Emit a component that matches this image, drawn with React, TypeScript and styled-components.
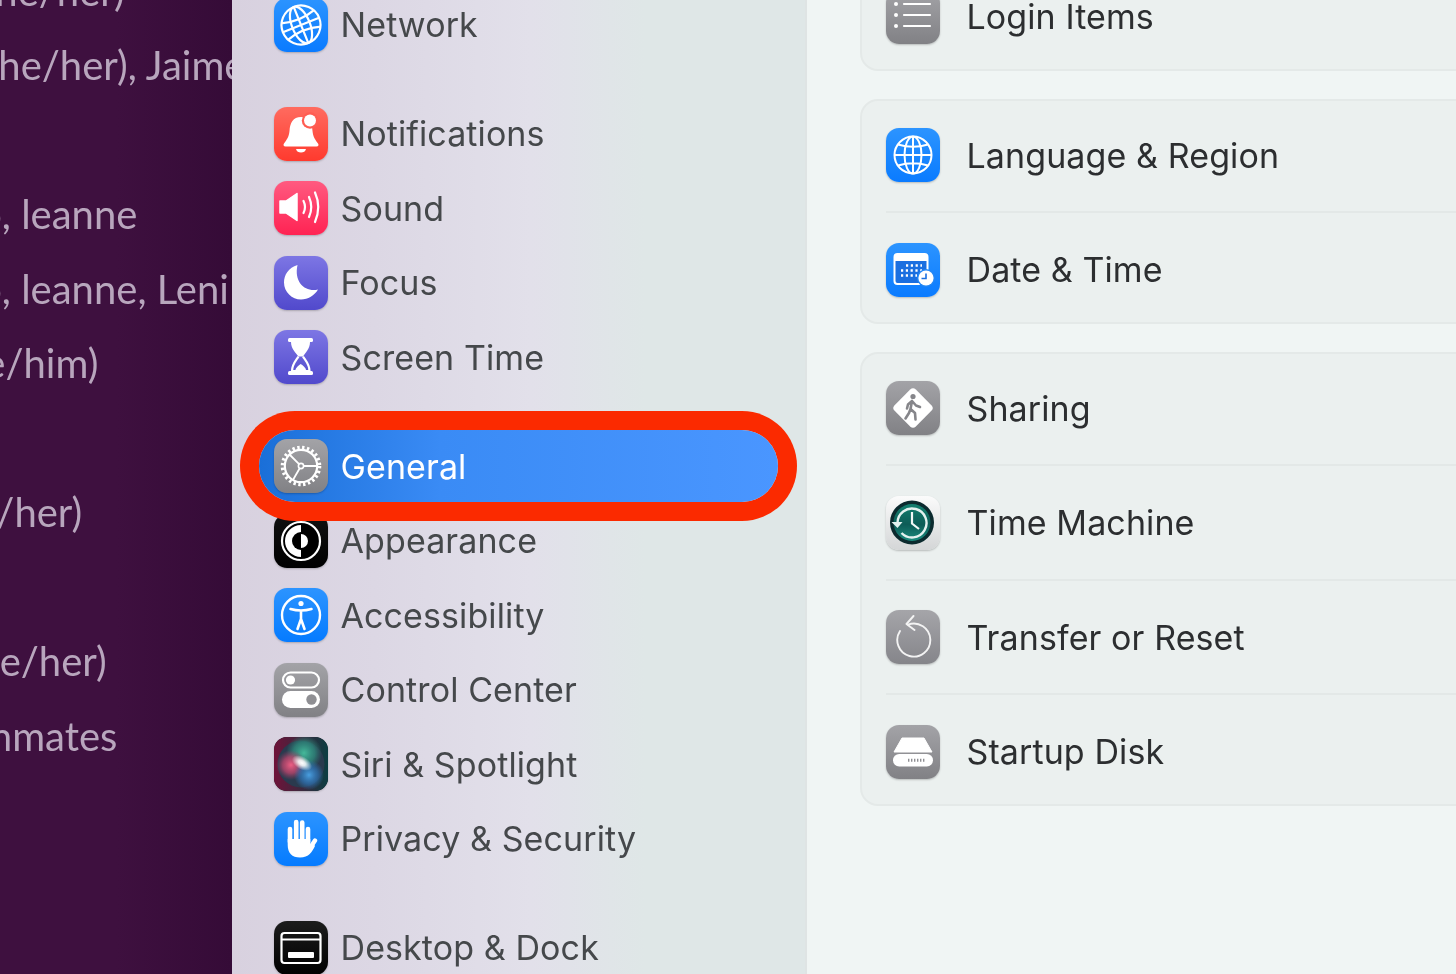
import React from 'react';
import styled, { createGlobalStyle } from 'styled-components';

const Global = createGlobalStyle`
  html, body { margin: 0; padding: 0; background: #f0f5f4; }
  body { font-family: Inter, "Noto Sans", "Liberation Sans", sans-serif; overflow: hidden; }
`;

const Page = styled.div`
  display: flex;
  width: 1456px;
  height: 974px;
  overflow: hidden;
`;

const ChatPane = styled.div`
  flex: 0 0 232px;
  height: 974px;
  overflow: hidden;
  background: linear-gradient(90deg, #3e103f 0%, #3e103f 50%, #350b37 100%);
  font-family: Lato, "Open Sans", sans-serif;
  font-size: 40px;
  color: #b8a6bd;
`;

const ChatList = styled.div`
  margin-top: -46.25px;
`;

const ChatLine = styled.div<{ $shift: number }>`
  height: 74.5px;
  line-height: 74.5px;
  white-space: nowrap;
  margin-left: ${p => p.$shift}px;
  filter: blur(0.4px);
`;

const ChatGap = styled.div`
  height: 40px;
`;

const Sidebar = styled.nav`
  flex: 0 0 519px;
  height: 974px;
  overflow: hidden;
  padding: 0 27px 0 27px;
  border-right: 2px solid #dfe4e4;
  background: linear-gradient(90deg, #d8d1df 0%, #dcd7e4 25%, #e2e0ea 52%, #dfe7e7 72%, #dfe7e7 100%);
`;

const SideList = styled.div`
  display: flex;
  flex-direction: column;
  margin-top: -12.75px;
`;

const SideRow = styled.div<{ $active?: boolean }>`
  position: relative;
  z-index: ${p => (p.$active ? 1 : 0)};
  display: flex;
  flex: 0 0 72px;
  align-items: center;
  gap: 12.5px;
  margin: 1.25px 0;
  padding-left: 15px;
  border-radius: 36px;
  background: ${p => (p.$active ? 'linear-gradient(90deg, #1a6fd8 0%, #3a8bf5 35%, #4a96ff 100%)' : 'transparent')};
  box-shadow: ${p => (p.$active ? '0 0 0 19px #fb2a00' : 'none')};
`;

const SideLabel = styled.span<{ $active?: boolean }>`
  font-size: 34px;
  letter-spacing: 0.1px;
  white-space: nowrap;
  color: ${p => (p.$active ? '#ffffff' : '#45484b')};
  filter: blur(0.4px);
`;

const SideGap = styled.div`
  flex: 0 0 34.5px;
`;

const Content = styled.main`
  flex: 1;
  min-width: 0;
  height: 974px;
  overflow: hidden;
  padding-left: 53px;
  background: #f0f5f4;
`;

const Stack = styled.div`
  display: flex;
  flex-direction: column;
  gap: 27.75px;
  margin-top: -39.5px;
  margin-right: -40px;
`;

const Card = styled.section`
  border: 2px solid #e4e9e8;
  border-radius: 18px;
  background: #ebf0ef;
  padding: 0 0 0 24px;
`;

const CardRow = styled.div`
  display: flex;
  align-items: center;
  gap: 26.5px;
  padding: 29.25px 0;
  border-top: 2px solid #e3e8e7;
  &:first-child { border-top: 0; padding-top: 27px; }
  &:last-child { padding-bottom: 25.75px; }
`;

const CardLabel = styled.span`
  font-size: 34px;
  letter-spacing: 0.1px;
  white-space: nowrap;
  color: #2c2e30;
  filter: blur(0.4px);
`;

const Tile = styled.div<{ $from: string; $to: string }>`
  flex: 0 0 54px;
  width: 54px;
  height: 54px;
  border-radius: 13px;
  overflow: hidden;
  background: linear-gradient(180deg, ${p => p.$from}, ${p => p.$to});
  box-shadow: 0 1px 2px rgba(0, 0, 0, 0.22);
`;

const Art = styled.svg`
  display: block;
  width: 54px;
  height: 54px;
  filter: blur(0.25px);
`;

const W = '#ffffff';

const Blue = ['#2c94ff', '#0a7bff'];
const Gray = ['#a3a3a7', '#818185'];
const Indigo = ['#7d76e4', '#5149cc'];

const icons: Record<string, { c: string[]; art: React.ReactNode }> = {
  network: {
    c: Blue,
    art: (
      <g fill="none" stroke={W} strokeWidth="2.2" transform="rotate(-22 27 27)">
        <circle cx="27" cy="27" r="19.5" />
        <ellipse cx="27" cy="27" rx="9" ry="19.5" />
        <path d="M27 7.5V46.5M9 18Q27 24 45 18M7.5 27H46.5M9 36Q27 30 45 36" />
      </g>
    ),
  },
  bell: {
    c: ['#ff6b5f', '#ff3a2e'],
    art: (
      <g>
        <path fill={W} d="M27 10C19 10 16 16 15.5 24C15 30 12.5 33 10 36.5C9 38 9.5 39.5 11.5 39.5H42.5C44.5 39.5 45 38 44 36.5C41.5 33 39 30 38.5 24C38 16 35 10 27 10Z" />
        <path fill={W} d="M22 42H32C31.5 44.5 29.5 45.5 27 45.5C24.5 45.5 22.5 44.5 22 42Z" />
        <circle cx="36" cy="13.5" r="8.2" fill="#ff5d52" />
        <circle cx="36" cy="13.5" r="6" fill={W} />
      </g>
    ),
  },
  sound: {
    c: ['#ff5a80', '#ff2353'],
    art: (
      <g>
        <path fill={W} stroke={W} strokeWidth="1.5" strokeLinejoin="round" d="M6 20H12L23 12.5V39.5L12 32H6Z" />
        <path fill="none" stroke={W} strokeWidth="2.2" strokeLinecap="round" d="M29.5 20Q32.5 26 29.5 32M35 16Q39.5 26 35 36M41 11.5Q47.5 26 41 41" />
      </g>
    ),
  },
  moon: {
    c: Indigo,
    art: <path fill={W} d="M23.5 9C14.5 11.5 10 19 10 26.5C10 36 18 43.5 27 43.5C34 43.5 40.5 39.5 44 33.5C32 36.5 19.5 27 23.5 9Z" />,
  },
  hourglass: {
    c: Indigo,
    art: (
      <g>
        <rect x="14" y="8" width="25" height="4" rx="1.5" fill={W} />
        <rect x="14" y="41" width="25" height="4" rx="1.5" fill={W} />
        <path fill={W} d="M17 12H36C36 19 31 23 29 26.5H24.5C22 23 17 19 17 12Z" />
        <path fill="none" stroke={W} strokeWidth="2.2" d="M24.5 26.5C22.5 30 18 34 18 41H35.5C35.5 34 31 30 29 26.5" />
        <path fill={W} d="M21 41C22 37 25 35 26.7 34C28.5 35 31.5 37 32.5 41Z" />
      </g>
    ),
  },
  gear: {
    c: Gray,
    art: (
      <g fill="none" stroke={W}>
        <circle cx="27" cy="27" r="18.6" strokeWidth="3.4" strokeDasharray="2.4 2.5" />
        <circle cx="27" cy="27" r="16.2" strokeWidth="2.2" />
        <circle cx="27" cy="27" r="2.6" strokeWidth="1.6" />
        <path strokeWidth="1.8" d="M25.1 25.1L15 15M29.6 27H43.5M25.7 29.3L18.8 41.3" />
      </g>
    ),
  },
  appearance: {
    c: ['#111111', '#000000'],
    art: (
      <g>
        <circle cx="27" cy="27" r="19" fill="#000" stroke={W} strokeWidth="2.2" />
        <path fill={W} d="M27 11A16 16 0 0 0 27 43Z" />
        <path fill="#000" d="M27 18A9 9 0 0 0 27 36Z" />
        <path fill={W} d="M27 20A7 7 0 0 1 27 34Z" />
      </g>
    ),
  },
  access: {
    c: ['#2c94ff', '#057bff'],
    art: (
      <g fill="none" stroke={W}>
        <circle cx="27" cy="27" r="19" strokeWidth="2.4" />
        <circle cx="27" cy="15.5" r="2.6" fill={W} stroke="none" />
        <path strokeWidth="2.6" strokeLinecap="round" d="M16.5 21Q27 24 37.5 21M27 23V31M27 31L23.5 41M27 31L30.5 41" />
      </g>
    ),
  },
  control: {
    c: Gray,
    art: (
      <g>
        <rect x="9" y="9.5" width="36" height="15" rx="7.5" fill="none" stroke={W} strokeWidth="2.2" />
        <circle cx="16.5" cy="17" r="4.6" fill={W} />
        <rect x="8" y="28" width="38" height="17" rx="8.5" fill={W} />
        <circle cx="37.5" cy="36.5" r="5.2" fill="#8f8f93" />
      </g>
    ),
  },
  siri: {
    c: ['#1a1a22', '#101018'],
    art: (
      <g>
        <defs>
          <radialGradient id="sPink"><stop offset="0" stopColor="#ef5f84" /><stop offset="0.55" stopColor="#c9466f" stopOpacity="0.7" /><stop offset="1" stopColor="#a33560" stopOpacity="0" /></radialGradient>
          <radialGradient id="sGreen"><stop offset="0" stopColor="#45b99a" /><stop offset="0.6" stopColor="#2f9a86" stopOpacity="0.65" /><stop offset="1" stopColor="#2b8c7c" stopOpacity="0" /></radialGradient>
          <radialGradient id="sBlue"><stop offset="0" stopColor="#4a9fe0" /><stop offset="0.6" stopColor="#2f7cc4" stopOpacity="0.6" /><stop offset="1" stopColor="#2f7cc4" stopOpacity="0" /></radialGradient>
          <radialGradient id="sWhite"><stop offset="0" stopColor="#ffffff" /><stop offset="0.35" stopColor="#ffffff" stopOpacity="0.85" /><stop offset="1" stopColor="#ffffff" stopOpacity="0" /></radialGradient>
          <linearGradient id="sBase" x1="0" x2="1"><stop offset="0" stopColor="#6f1239" /><stop offset="1" stopColor="#0c3d42" /></linearGradient>
        </defs>
        <rect width="54" height="54" fill="url(#sBase)" />
        <circle cx="27" cy="27" r="23.5" fill="#2a3a4e" />
        <circle cx="30" cy="16" r="18" fill="url(#sGreen)" />
        <circle cx="17" cy="28" r="15" fill="url(#sPink)" />
        <circle cx="35" cy="38" r="15" fill="url(#sBlue)" />
        <ellipse cx="28" cy="26" rx="11" ry="6.5" fill="url(#sWhite)" transform="rotate(30 28 26)" />
      </g>
    ),
  },
  hand: {
    c: ['#2c94ff', '#057bff'],
    art: (
      <g>
        <g stroke={W} strokeWidth="4.6" strokeLinecap="round" fill="none">
          <path d="M16 30V17M22.2 28V10M28.2 28V10.5M34 30V17" />
          <path d="M36 36L41 28.5" strokeWidth="4.4" />
        </g>
        <path fill={W} d="M13.7 27H36.3V34L39 31L41 34C38 40 35 45.5 26 45.5C18 45.5 13.7 41 13.7 33Z" />
      </g>
    ),
  },
  desktop: {
    c: ['#1c1c1c', '#000000'],
    art: (
      <g fill="none" stroke={W}>
        <rect x="7.5" y="12" width="39" height="30" rx="3" strokeWidth="2.2" />
        <path strokeWidth="2" d="M8 18.5H46" />
        <rect x="14" y="31" width="26" height="6" rx="1" fill={W} stroke="none" />
      </g>
    ),
  },
  login: {
    c: Gray,
    art: (
      <g>
        <circle cx="10" cy="14" r="2" fill={W} />
        <circle cx="10" cy="25" r="2" fill={W} />
        <circle cx="10" cy="36" r="2" fill={W} />
        <path stroke={W} strokeWidth="2.2" strokeLinecap="round" d="M18 14H44M18 25H44M18 36H44" />
      </g>
    ),
  },
  language: {
    c: Blue,
    art: (
      <g fill="none" stroke={W} strokeWidth="2">
        <circle cx="27" cy="27" r="18.5" />
        <ellipse cx="27" cy="27" rx="8.5" ry="18.5" />
        <path d="M27 8.5V45.5M8.5 27H45.5M12 16.5Q27 21 42 16.5M12 37.5Q27 33 42 37.5" />
      </g>
    ),
  },
  date: {
    c: Blue,
    art: (
      <g>
        <rect x="8.5" y="11" width="33" height="30" rx="3" fill="#1b6fe0" stroke={W} strokeWidth="2" />
        <path fill={W} d="M8.5 14a3 3 0 0 1 3-3h27a3 3 0 0 1 3 3v4h-33Z" />
        <path stroke={W} strokeWidth="2.4" strokeDasharray="2.2 2.6" d="M20 22.5H36M15 27.5H36M15 32.5H31" />
        <circle cx="40" cy="35" r="9" fill="#2487f5" />
        <circle cx="40" cy="35" r="7.6" fill={W} />
        <path fill="none" stroke="#1b6fe0" strokeWidth="1.6" d="M40 30.5V35.5H35.5" />
      </g>
    ),
  },
  sharing: {
    c: Gray,
    art: (
      <g>
        <rect x="12" y="12" width="30" height="30" rx="4" fill={W} transform="rotate(45 27 27)" />
        <circle cx="27" cy="15.5" r="2.6" fill="#85858a" />
        <path fill="none" stroke="#85858a" strokeWidth="2.6" strokeLinecap="round" strokeLinejoin="round" d="M26 20L24.5 28L29 32L29.5 38.5M24.5 28L23 32L19.5 37.5M26 20L22 23.5L21 27.5M26 20L30 24.5L34 26" />
      </g>
    ),
  },
  time: {
    c: ['#fbfbfb', '#d4d6d7'],
    art: (
      <g>
        <defs>
          <linearGradient id="tmG" x1="0" x2="0" y1="0" y2="1"><stop offset="0" stopColor="#12806f" /><stop offset="0.55" stopColor="#0d5c57" /><stop offset="1" stopColor="#1a8c7e" /></linearGradient>
        </defs>
        <circle cx="26" cy="26.5" r="22" fill="#0b2a2e" />
        <circle cx="26" cy="26.5" r="18.5" fill="url(#tmG)" />
        <path fill="none" stroke="#e3f1ef" strokeWidth="2.4" d="M11.5 27A14.5 14.5 0 1 1 15.5 37" />
        <path fill="#e3f1ef" d="M5.5 26H16.5L11.5 32Z" />
        <path fill="none" stroke="#f2f8f7" strokeWidth="2.2" d="M26 16V27.5L33 33" />
      </g>
    ),
  },
  transfer: {
    c: ['#a5a5a9', '#85858a'],
    art: (
      <g fill="none" stroke="#f3f3f3" strokeWidth="1.9" strokeLinecap="round" strokeLinejoin="round">
        <path d="M22 14.6A16.5 16.5 0 1 1 14 21" />
        <path d="M27.5 6L20.5 14L28.5 20" />
      </g>
    ),
  },
  disk: {
    c: Gray,
    art: (
      <g>
        <path fill={W} d="M16 13H38L46 27H8Z" strokeLinejoin="round" stroke={W} strokeWidth="1" />
        <rect x="7" y="29" width="40" height="12.5" rx="6.2" fill={W} />
        <path stroke="#8f8f93" strokeWidth="3" strokeDasharray="1.4 1.6" d="M22 35.3H40" />
      </g>
    ),
  },
};

const Icon = ({ name }: { name: string }) => {
  const i = icons[name];
  return (
    <Tile $from={i.c[0]} $to={i.c[1]}>
      <Art viewBox="0 0 54 54">{i.art}</Art>
    </Tile>
  );
};

type Item = { n: string; i: string } | null;

const sideItems: Item[] = [
  { n: 'Network', i: 'network' },
  null,
  { n: 'Notifications', i: 'bell' },
  { n: 'Sound', i: 'sound' },
  { n: 'Focus', i: 'moon' },
  { n: 'Screen Time', i: 'hourglass' },
  null,
  { n: 'General', i: 'gear' },
  { n: 'Appearance', i: 'appearance' },
  { n: 'Accessibility', i: 'access' },
  { n: 'Control Center', i: 'control' },
  { n: 'Siri & Spotlight', i: 'siri' },
  { n: 'Privacy & Security', i: 'hand' },
  null,
  { n: 'Desktop & Dock', i: 'desktop' },
];

const cards = [
  [{ n: 'Login Items', i: 'login' }],
  [
    { n: 'Language & Region', i: 'language' },
    { n: 'Date & Time', i: 'date' },
  ],
  [
    { n: 'Sharing', i: 'sharing' },
    { n: 'Time Machine', i: 'time' },
    { n: 'Transfer or Reset', i: 'transfer' },
    { n: 'Startup Disk', i: 'disk' },
  ],
];

const chat: ([string, number] | null)[] = [
  ['she/her)', -22],
  ['she/her), Jaime', -19],
  ['', 0],
  ['Jo, leanne', -37],
  ['Jo, leanne, Leni', -37],
  ['he/him)', -38],
  ['', 0],
  ['s/her)', -21],
  ['', 0],
  ['she/her)', -40],
  ['teammates', -76],
  ['', 0],
  null,
  ['', 0],
  ['s', -10],
];

export default function App() {
  return (
    <Page>
      <Global />
      <ChatPane>
        <ChatList>
          {chat.map((c, k) =>
            c ? <ChatLine key={k} $shift={c[1]}>{c[0]}</ChatLine> : <ChatGap key={k} />
          )}
        </ChatList>
      </ChatPane>
      <Sidebar>
        <SideList>
          {sideItems.map((it, k) =>
            it ? (
              <SideRow key={k} $active={it.n === 'General'}>
                <Icon name={it.i} />
                <SideLabel $active={it.n === 'General'}>{it.n}</SideLabel>
              </SideRow>
            ) : (
              <SideGap key={k} />
            )
          )}
        </SideList>
      </Sidebar>
      <Content>
        <Stack>
          {cards.map((rows, k) => (
            <Card key={k}>
              {rows.map(r => (
                <CardRow key={r.n}>
                  <Icon name={r.i} />
                  <CardLabel>{r.n}</CardLabel>
                </CardRow>
              ))}
            </Card>
          ))}
        </Stack>
      </Content>
    </Page>
  );
}
